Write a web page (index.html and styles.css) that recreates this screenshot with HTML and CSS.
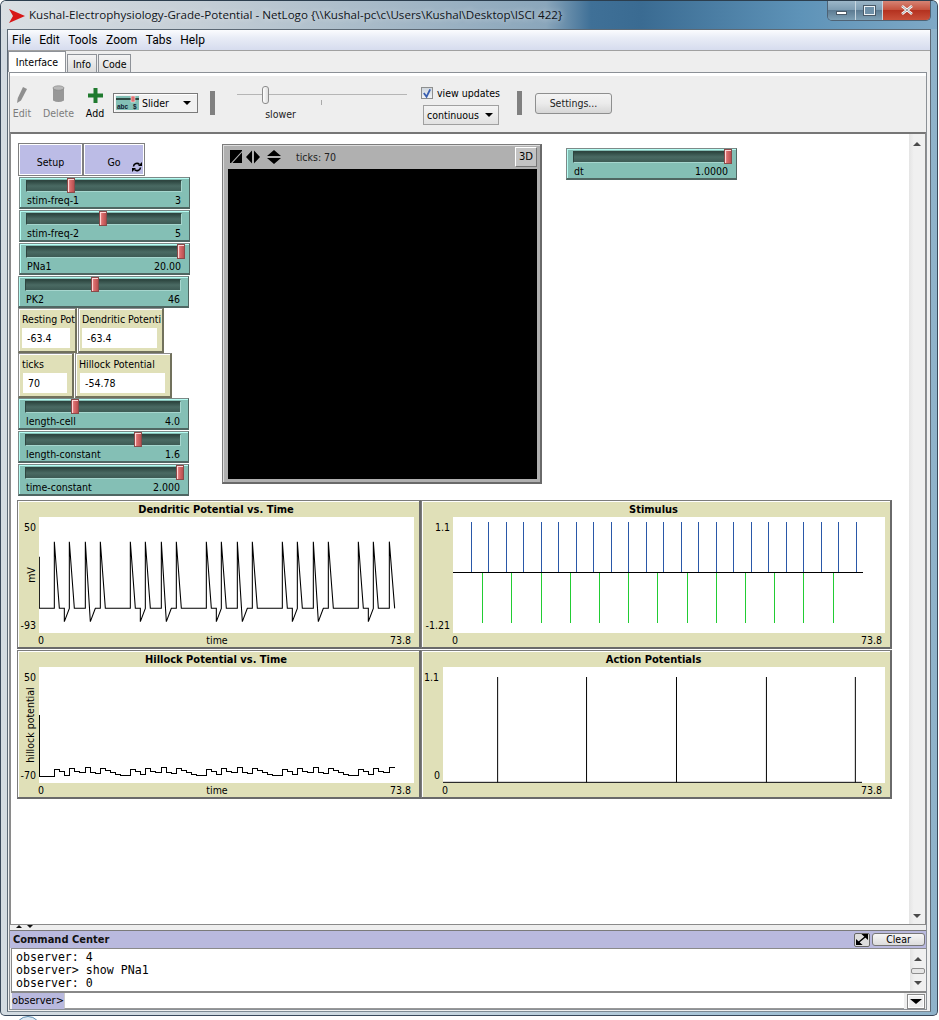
FILE: index.html
```html
<!DOCTYPE html>
<html lang="en">
<head>
<meta charset="utf-8">
<title>Kushal-Electrophysiology-Grade-Potential - NetLogo</title>
<link rel="stylesheet" href="styles.css">
</head>
<body>
<div class="window">
  <header class="titlebar">
    <svg class="app-icon" width="16" height="15" viewBox="0 0 16 15"><polygon points="0,0 16,7 0,14 4,7" fill="#d81818"/></svg>
    <span class="title-text">Kushal-Electrophysiology-Grade-Potential - NetLogo {\\Kushal-pc\c\Users\Kushal\Desktop\ISCI 422}</span>
    <div class="caption-buttons">
      <div class="cap cap-min"><span class="glyph-min"></span></div>
      <div class="cap cap-max"><span class="glyph-max"></span></div>
      <div class="cap cap-close"><svg width="14" height="10" viewBox="0 0 14 10"><path d="M2 1l10 8M12 1L2 9" stroke="#fff" stroke-width="2.6" fill="none"/><path d="M2 1l10 8M12 1L2 9" stroke="#59606a" stroke-width=".6" fill="none"/></svg></div>
    </div>
  </header>
  <div class="client">
    <nav class="menubar"><span>File</span><span>Edit</span><span>Tools</span><span>Zoom</span><span>Tabs</span><span>Help</span></nav>
    <div class="tabs">
      <span class="tab tab-active">Interface</span>
      <span class="tab tab-info">Info</span>
      <span class="tab tab-code">Code</span>
    </div>
    <div class="pane">
      <div class="toolbar">
        <div class="tool tool-edit">
          <svg width="10" height="16" viewBox="0 0 10 16"><path d="M6 0l4 2L4 13.500 0 16 .8 11z" fill="#8f8f8f"/></svg>
          <span class="muted">Edit</span>
        </div>
        <div class="tool tool-delete">
          <svg width="13" height="18" viewBox="0 0 13 18"><path d="M1 3h11v12.500q-5.500 3-11 0z" fill="#979797"/><ellipse cx="6.500" cy="3" rx="5.500" ry="2.200" fill="#b8b8b8" stroke="#8a8a8a" stroke-width=".7"/></svg>
          <span class="muted">Delete</span>
        </div>
        <div class="tool tool-add">
          <svg width="15" height="15" viewBox="0 0 15 15"><path d="M5.500 0h4v5.500H15v4H9.500V15h-4V9.500H0v-4h5.500z" fill="#1f7a2e"/></svg>
          <span>Add</span>
        </div>
        <div class="selector">
          <svg width="23" height="14" viewBox="0 0 23 14"><rect width="23" height="14" fill="#84c0b6"/><rect y="2" width="23" height="2" fill="#2f4a44"/><rect x="15" width="4" height="6" fill="#e07070" stroke="#fff" stroke-width=".5"/><text x="1" y="12.500" class="sel-text">abc</text><text x="17" y="12.500" class="sel-text">$</text></svg>
          <span class="sel-label">Slider</span>
          <span class="tri-down"></span>
        </div>
        <div class="divider div-a"></div>
        <div class="speed">
          <div class="speed-track"><span class="speed-thumb"></span><span class="speed-tick"></span></div>
          <span class="speed-label">slower</span>
        </div>
        <div class="updates">
          <label class="check-row"><span class="checkbox"><svg width="11" height="11" viewBox="0 0 11 11"><path d="M2 5l3 4 4-8" fill="none" stroke="#3a5fb0" stroke-width="2"/></svg></span>view updates</label>
          <div class="update-mode"><span>continuous</span><span class="tri-down"></span></div>
        </div>
        <div class="divider div-b"></div>
        <div class="settings">Settings...</div>
      </div>

      <div class="workspace">
        <div class="canvas">
          <div class="nl-button w-setup">Setup</div>
          <div class="nl-button w-go">Go
            <svg class="forever" width="10" height="10" viewBox="0 0 10 10"><path d="M1.500 4.500A3.500 3.500 0 0 1 7.500 2.500M8.500 5.500A3.500 3.500 0 0 1 2.500 7.500" fill="none" stroke="#000" stroke-width="1.600"/><path d="M6 4h4V0zM4 6H0v4z" fill="#000"/></svg>
          </div>

          <div class="slider w-s1"><div class="track"><span class="thumb" style="left:28.500%"></span></div><div class="slider-text"><span>stim-freq-1</span><span>3</span></div></div>
          <div class="slider w-s2"><div class="track"><span class="thumb" style="left:49.500%"></span></div><div class="slider-text"><span>stim-freq-2</span><span>5</span></div></div>
          <div class="slider w-s3"><div class="track"><span class="thumb" style="left:100%"></span></div><div class="slider-text"><span>PNa1</span><span>20.00</span></div></div>
          <div class="slider w-s4"><div class="track"><span class="thumb" style="left:45%"></span></div><div class="slider-text"><span>PK2</span><span>46</span></div></div>

          <div class="monitor w-m1"><div class="mon-label">Resting Pot</div><div class="mon-value">-63.4</div></div>
          <div class="monitor w-m2"><div class="mon-label">Dendritic Potenti</div><div class="mon-value">-63.4</div></div>
          <div class="monitor w-m3"><div class="mon-label">ticks</div><div class="mon-value">70</div></div>
          <div class="monitor w-m4"><div class="mon-label">Hillock Potential</div><div class="mon-value">-54.78</div></div>

          <div class="slider w-s5"><div class="track"><span class="thumb" style="left:32%"></span></div><div class="slider-text"><span>length-cell</span><span>4.0</span></div></div>
          <div class="slider w-s6"><div class="track"><span class="thumb" style="left:73%"></span></div><div class="slider-text"><span>length-constant</span><span>1.6</span></div></div>
          <div class="slider w-s7"><div class="track"><span class="thumb" style="left:100%"></span></div><div class="slider-text"><span>time-constant</span><span>2.000</span></div></div>
          <div class="slider w-dt"><div class="track"><span class="thumb" style="left:100%"></span></div><div class="slider-text"><span>dt</span><span>1.0000</span></div></div>

          <div class="view w-view">
            <div class="view-head">
              <svg width="52" height="14" viewBox="0 0 52 14"><path d="M0 0h12v1L1 13H0z" fill="#000"/><path d="M12 2.500V13H2.500z" fill="#000"/><path d="M16 7l6-6.500v13zM24 .5l6 6.500-6 6.500z" fill="#000"/><path d="M37 6l7-6 7 6zM37 8h14l-7 6z" fill="#000"/></svg>
              <span class="view-ticks">ticks: 70</span>
              <span class="btn-3d">3D</span>
            </div>
            <div class="view-world"></div>
          </div>

          <div class="plot w-p1">
            <div class="plot-title">Dendritic Potential vs. Time</div>
            <div class="y-axis"><span>50</span><span class="y-name">mV</span><span>-93</span></div>
            <svg class="plot-area" viewBox="87 66 1125 348" preserveAspectRatio="none">
              <polyline class="ln ln-smooth" points="88,185 88,340 133,340 133,140 148,340 163,340 163,380 178,340 178,140 193,340 226,340 226,140 241,380 256,340 271,340 271,140 286,340 361,340 361,140 376,340 391,340 391,380 406,340 406,140 421,340 454,340 454,140 469,380 484,340 499,340 499,140 514,340 589,340 589,140 604,340 619,340 619,380 634,340 634,140 649,340 682,340 682,140 697,380 712,340 727,340 727,140 742,340 817,340 817,140 832,340 847,340 847,380 862,340 862,140 877,340 910,340 910,140 925,380 940,340 955,340 955,140 970,340 1045,340 1045,140 1060,340 1075,340 1075,380 1090,340 1090,140 1105,340 1138,340 1138,140 1154,340"/>
            </svg>
            <div class="x-axis"><span>0</span><span>time</span><span>73.8</span></div>
          </div>

          <div class="plot plot-wide w-p2">
            <div class="plot-title">Stimulus</div>
            <div class="y-axis"><span>1.1</span><span>-1.21</span></div>
            <svg class="plot-area" viewBox="100 66 1296 348" preserveAspectRatio="none">
              <path class="blue" d="M154 81V232M205 81V232M259 81V232M310 81V232M364 81V232M415 81V232M469 81V232M520 81V232M574 81V232M625 81V232M679 81V232M730 81V232M784 81V232M835 81V232M889 81V232M940 81V232M994 81V232M1045 81V232M1099 81V232M1150 81V232M1204 81V232M1255 81V232M1309 81V232"/>
              <path class="green" d="M187 232V384M274 232V384M364 232V384M451 232V384M538 232V384M625 232V384M712 232V384M802 232V384M889 232V384M976 232V384M1063 232V384M1150 232V384M1240 232V384"/>
              <path class="ln" d="M100 232H1329"/>
            </svg>
            <div class="x-axis"><span>0</span><span>73.8</span></div>
          </div>

          <div class="plot w-p3">
            <div class="plot-title">Hillock Potential vs. Time</div>
            <div class="y-axis"><span>50</span><span class="y-name y-name-long">hillock potential</span><span>-70</span></div>
            <svg class="plot-area" viewBox="87 51 1125 348" preserveAspectRatio="none">
              <polyline class="ln" points="88,195 88,379 133,379 133,358 148,358 148,365 163,365 163,376 178,376 178,355 193,355 193,365 208,365 208,368 226,368 226,352 241,352 241,367 256,367 256,370 271,370 271,355 286,355 286,362 301,362 301,368 316,368 316,372 331,372 331,376 361,376 361,358 376,358 376,365 391,365 391,373 406,373 406,355 421,355 421,365 436,365 436,368 454,368 454,352 469,352 469,367 484,367 484,370 499,370 499,355 514,355 514,362 529,362 529,368 544,368 544,372 559,372 559,376 589,376 589,358 604,358 604,365 619,365 619,373 634,373 634,355 649,355 649,365 664,365 664,368 682,368 682,352 697,352 697,367 712,367 712,370 727,370 727,355 742,355 742,362 757,362 757,368 772,368 772,372 787,372 787,376 817,376 817,358 832,358 832,365 847,365 847,373 862,373 862,355 877,355 877,365 892,365 892,368 910,368 910,352 925,352 925,367 940,367 940,370 955,370 955,355 970,355 970,362 985,362 985,368 1000,368 1000,372 1015,372 1015,376 1045,376 1045,358 1060,358 1060,365 1075,365 1075,373 1090,373 1090,355 1105,355 1105,365 1120,365 1120,368 1138,368 1138,352 1154,352"/>
            </svg>
            <div class="x-axis"><span>0</span><span>time</span><span>73.8</span></div>
          </div>

          <div class="plot plot-mid w-p4">
            <div class="plot-title">Action Potentials</div>
            <div class="y-axis"><span>1.1</span><span>0</span></div>
            <svg class="plot-area" viewBox="68 51 1327 348" preserveAspectRatio="none">
              <path class="ln" d="M232 81V397M499 81V397M769 81V397M1039 81V397M1306 81V397M68 397H1326"/>
            </svg>
            <div class="x-axis"><span>0</span><span>73.8</span></div>
          </div>
        </div>
        <div class="scrollbar"><span class="sb-up"></span><span class="sb-down"></span></div>
      </div>

      <div class="splitter"><span class="tiny-up"></span><span class="tiny-down"></span></div>

      <section class="command-center">
        <div class="cc-head">
          <span class="cc-title">Command Center</span>
          <span class="cc-expand"><svg width="12" height="11" viewBox="0 0 12 11"><path d="M6.500 0H12v5zM5.500 11H0V6zM3 8l6-5" stroke="#000" stroke-width="1.500" fill="#000"/></svg></span>
          <span class="cc-clear">Clear</span>
        </div>
        <div class="cc-body">
          <div class="cc-output">observer: 4
observer&gt; show PNa1
observer: 0</div>
          <div class="scrollbar sb-small"><span class="sb-up"></span><span class="sb-grip"></span><span class="sb-down"></span></div>
        </div>
        <div class="cc-input">
          <span class="cc-prompt">observer&gt;</span>
          <span class="cc-field"></span>
          <span class="cc-drop"><span class="tri-down tri-big"></span></span>
        </div>
      </section>
    </div>
  </div>
</div>
<div class="orb"></div>
</body>
</html>
```

FILE: styles.css
```css
* { box-sizing: border-box; }
html, body { margin: 0; padding: 0; }
body {
  width: 939px;
  height: 1020px;
  overflow: hidden;
  background: #fff;
  position: relative;
  font: 10.500px/14px "DejaVu Sans Condensed", "DejaVu Sans", sans-serif;
  font-stretch: condensed;
  color: #000;
}
.window {
  width: 938px;
  height: 1016px;
  display: flex;
  flex-direction: column;
  border: 1px solid #39485a;
  border-top-color: #2c3e4e;
  border-radius: 6px 6px 5px 5px;
  background: linear-gradient(to right, #d3dbe1 0, #cdd8e0 40%, #a4c2d6 80%, #8eb2c9 100%);
  overflow: hidden;
}
.titlebar {
  height: 28px;
  flex: none;
  display: flex;
  position: relative;
  padding-left: 8px;
  align-items: center;
  background: linear-gradient(to right, #dadfe3 0, #c4ced6 200px, #a3b7c6 400px, #8aa6bb 545px, #3f7097 590px, #3a6b92 640px, #5e93b8 800px, #7fa9c6 938px);
}
.app-icon { flex: none; margin-top: 2px; }
.title-text {
  margin-left: 4px;
  font: 11.600px/16px "Open Sans", "Noto Sans", sans-serif;
  color: #10141a;
  white-space: nowrap;
  text-shadow: 0 0 6px rgba(255,255,255,.75);
}
.caption-buttons {
  position: absolute;
  right: 6px;
  top: -1px;
  display: flex;
  height: 21px;
  border: 1px solid #4e6274;
  border-top: none;
  border-radius: 0 0 5px 5px;
  overflow: hidden;
}
.cap {
  display: flex;
  align-items: center;
  justify-content: center;
  background: linear-gradient(#9fb9cb, #7d9cb2 50%, #5c7b92 52%, #7ea0b5);
  border-right: 1px solid #c7d6e0;
}
.cap-min { width: 28px; }
.cap-max { width: 27px; }
.cap-close {
  width: 47px;
  border-right: none;
  background: linear-gradient(#d8897a, #c4513d 50%, #b43220 52%, #c9503a);
}
.glyph-min { width: 11px; height: 4px; margin-top: 6px; background: #fff; border: 1px solid #4a5a68; }
.glyph-max { width: 11px; height: 9px; border: 1.500px solid #eef3f6; outline: 1px solid #4a5a68; background: #6f90a8; }

.client {
  margin: 0 6px 3px 6px;
  flex: 1;
  min-height: 0;
  display: flex;
  flex-direction: column;
  border: 1px solid #5c6975;
  border-bottom-color: #7d8a94;
  background: #f0f0f0;
}
.menubar {
  height: 21px;
  flex: none;
  display: flex;
  gap: 8.500px;
  padding: 3px 0 0 4px;
  font: 12px/14px Roboto, "Liberation Sans", sans-serif;
  border-bottom: 1px solid #a0a0a0;
  background: linear-gradient(#fbfcfe, #e8ecf6 40%, #d6dcee);
}
.tabs {
  height: 21px;
  flex: none;
  display: flex;
  align-items: flex-end;
  background: #eee;
}
.tab {
  height: 18px;
  padding: 2px 0 0;
  text-align: center;
  background: linear-gradient(#f4f4f4, #dcdcdc);
  border: 1px solid #8e9298;
  border-bottom: none;
  margin-right: 1px;
}
.tab-active {
  width: 58px;
  height: 21px;
  padding-top: 3px;
  background: #fff;
  margin-right: 1px;
}
.tab-info { width: 30px; }
.tab-code { width: 33px; }
.pane {
  flex: 1;
  min-height: 0;
  margin: 0 3px 1px 1px;
  display: flex;
  flex-direction: column;
  border: 1px solid #8b9096;
}
.toolbar {
  height: 59px;
  flex: none;
  display: flex;
  align-items: center;
  padding: 0 0 2px 2px;
  border-top: 3px solid #fff;
  background: #eee;
}
.tool {
  display: flex;
  flex-direction: column;
  align-items: center;
  justify-content: flex-end;
  height: 34px;
  margin-right: 11px;
  white-space: nowrap;
}
.tool svg { flex: none; margin-bottom: 3px; }
.tool-edit { width: 20px; }
.tool-delete { width: 31px; margin-right: 12px; }
.tool-add { width: 18px; margin-right: 9px; }
.muted { color: #7c7c7c; }
.selector {
  width: 85px;
  height: 20px;
  display: flex;
  align-items: center;
  padding: 0 6px 0 2px;
  background: #f1f1f1;
  border: 1px solid #7a7a7a;
  box-shadow: inset 1px 1px 0 #fff;
}
.sel-text { font: bold 6.500px "Liberation Sans", sans-serif; fill: #123; }
.sel-label { margin-left: 3px; flex: 1; }
.tri-down {
  width: 0;
  height: 0;
  border: 4px solid transparent;
  border-top: 4px solid #000;
  border-bottom: none;
}
.tri-big { border-width: 5px 6px 0; }
.divider { width: 5px; height: 24px; flex: none; background: #808080; }
.div-a { margin: 0 22px 0 12px; }
.div-b { margin: 0 13px 0 16px; }
.speed {
  width: 170px;
  height: 36px;
  flex: none;
  margin-right: 14px;
  display: flex;
  flex-direction: column;
}
.speed-track {
  height: 20px;
  position: relative;
  flex: none;
  background: linear-gradient(#b5b5b5, #b5b5b5) 0 9px / 100% 1px no-repeat;
}
.speed-thumb {
  position: absolute;
  left: 25px;
  top: 1px;
  width: 7px;
  height: 18px;
  border: 1px solid #8c8c8c;
  border-radius: 3px;
  background: linear-gradient(to right, #fff, #ddd);
}
.speed-tick { position: absolute; left: 84px; top: 15px; width: 1px; height: 5px; background: #aaa; }
.speed-label { text-align: center; margin-right: 83px; margin-top: 2px; color: #222; }
.updates {
  width: 80px;
  flex: none;
  margin-top: 5px;
  display: flex;
  flex-direction: column;
  gap: 5px;
}
.check-row { display: flex; align-items: center; gap: 4px; white-space: nowrap; height: 14px; }
.checkbox {
  width: 12px;
  height: 12px;
  flex: none;
  display: flex;
  border: 1px solid #8e8f8f;
  background: linear-gradient(#cfd6dd, #f2f4f6);
}
.update-mode {
  width: 76px;
  height: 20px;
  margin-left: 2px;
  display: flex;
  align-items: center;
  justify-content: space-between;
  padding: 0 5px 0 3px;
  border: 1px solid #a0a0a0;
  background: linear-gradient(#f4f4f4, #e2e2e2);
}
.settings {
  width: 77px;
  height: 21px;
  text-align: center;
  line-height: 19px;
  border: 1px solid #8e8f8f;
  border-radius: 3px;
  background: linear-gradient(#f4f4f4, #ebebeb 50%, #d6d6d6);
  color: #222;
}

.workspace {
  flex: 1;
  min-height: 0;
  display: flex;
  border: 1px solid #8a8a8a;
  border-top: 2px solid #767676;
  background: #fff;
}
.canvas {
  position: relative;
  flex: 1;
  min-width: 0;
  margin-top: -1px;
}
.scrollbar {
  width: 16px;
  flex: none;
  display: flex;
  flex-direction: column;
  justify-content: space-between;
  align-items: center;
  padding: 8px 0 6px;
  background: linear-gradient(to right, #e4e4e4, #f0f0f0 30%, #f0f0f0);
}
.sb-up, .sb-down { width: 0; height: 0; border: 4px solid transparent; }
.sb-up { border-top: none; border-bottom: 4px solid #4a4a4a; }
.sb-down { border-bottom: none; border-top: 4px solid #4a4a4a; }

.w-setup { left: 7px; top: 10px; width: 65px; height: 33px; }
.w-go { left: 72px; top: 10px; width: 62px; height: 33px; }
.w-s1 { left: 8px; top: 44px; }
.w-s2 { left: 8px; top: 77px; }
.w-s3 { left: 8px; top: 110px; }
.w-s4 { left: 7px; top: 143px; }
.w-s5 { left: 7px; top: 265px; }
.w-s6 { left: 7px; top: 298px; }
.w-s7 { left: 7px; top: 331px; }
.w-dt { left: 555px; top: 15px; }
.w-m1 { left: 7px; top: 175px; width: 59px; height: 45px; }
.w-m2 { left: 67px; top: 175px; width: 86px; height: 45px; }
.w-m3 { left: 7px; top: 220px; width: 56px; height: 45px; }
.w-m4 { left: 64px; top: 220px; width: 97px; height: 45px; }
.w-view { left: 211px; top: 11px; width: 320px; height: 340px; }
.w-p1 { left: 6px; top: 367px; width: 404px; }
.w-p2 { left: 410px; top: 367px; width: 471px; }
.w-p3 { left: 6px; top: 517px; width: 404px; }
.w-p4 { left: 410px; top: 517px; width: 471px; }

.nl-button {
  position: absolute;
  display: flex;
  align-items: center;
  justify-content: center;
  padding-top: 4px;
  background: #bcbce6;
  border: 1px solid #7f7f7f;
  box-shadow: inset 1px 1px 0 #fff, inset -1px -1px 0 #fff;
}
.forever { position: absolute; right: 2px; bottom: 3px; }
.slider {
  position: absolute;
  width: 171px;
  height: 32px;
  padding: 2px 7px 0 6px;
  background: #84bfb5;
  border: 1px solid #7c8a88;
  border-right-color: #4f6662;
  border-bottom: 2px solid #4f6662;
  box-shadow: inset 1px 1px 0 #b6fdf3;
}
.track {
  position: relative;
  height: 12px;
  background: linear-gradient(#2d4640, #4a6a63 50%, #3d5a54);
  border: 1px solid #2f4540;
  border-bottom-color: #a6d6ce;
  border-right-color: #a6d6ce;
}
.thumb {
  position: absolute;
  top: -3px;
  width: 8px;
  height: 15px;
  margin-left: -4px;
  background: linear-gradient(to right, #f09a9a, #d86a6a 40%, #b85050);
  border: 1px solid #8a4a4a;
  box-shadow: inset 1px 1px 0 #ffd6d6;
}
.slider-text {
  display: flex;
  justify-content: space-between;
  margin-top: 1px;
  padding: 0 1px;
  white-space: nowrap;
}
.monitor {
  position: absolute;
  overflow: hidden;
  padding: 3px 5px 0 3px;
  background: #e0e0b8;
  border: 1px solid #8c8c8c;
  border-right: 2px solid #71715c;
  border-bottom: 2px solid #71715c;
  box-shadow: inset 1px 1px 0 #fff;
}
.mon-label { height: 14px; white-space: nowrap; }
.mon-value {
  height: 20px;
  margin-top: 2px;
  padding: 3px 0 0 5px;
  background: #fff;
}
.w-m3 .mon-value, .w-m4 .mon-value { margin-left: 1px; }
.view {
  position: absolute;
  display: flex;
  flex-direction: column;
  padding: 0 3px 3px 5px;
  background: #b0b0b0;
  border: 1px solid #7c7c7c;
  border-right: 2px solid #6a6a6a;
  border-bottom: 2px solid #6a6a6a;
  box-shadow: inset 1px 1px 0 #ddd;
}
.view-head {
  height: 24px;
  flex: none;
  display: flex;
  align-items: center;
  padding-left: 2px;
}
.view-ticks { margin-left: 14px; color: #222; }
.btn-3d {
  margin-left: auto;
  width: 22px;
  height: 20px;
  text-align: center;
  font: 10px/18px "DejaVu Sans", sans-serif;
  background: #c4c4c4;
  border: 1px solid #777;
  border-top-color: #fff;
  border-left-color: #fff;
}
.view-world { flex: 1; background: #000; }
.plot {
  position: absolute;
  height: 149px;
  display: grid;
  grid-template-columns: 21px 1fr;
  grid-template-rows: 16px 116px 1fr;
  padding-right: 5px;
  background: #e0e0b8;
  border: 1px solid #7c7c7c;
  border-right: 2px solid #6a6a6a;
  border-bottom: 2px solid #6a6a6a;
  box-shadow: inset 1px 1px 0 #fff;
}
.plot-wide { grid-template-columns: 31px 1fr; }
.plot-mid { grid-template-columns: 21px 1fr; }
.plot-title {
  grid-column: 1 / -1;
  text-align: center;
  font-weight: 700;
  font-size: 11px;
  line-height: 15px;
  padding-top: 1px;
}
.y-axis {
  position: relative;
  display: flex;
  flex-direction: column;
  justify-content: space-between;
  align-items: flex-end;
  padding: 3px 3px 0 0;
  white-space: nowrap;
}
.y-axis span:last-child { margin-bottom: 1px; }
.plot-mid .y-axis span:first-child { margin-right: 1px; }
.y-name {
  position: absolute;
  right: 2px;
  top: 50%;
  writing-mode: vertical-rl;
  transform: translateY(-50%) rotate(180deg);
  line-height: 12px;
}
.y-name-long { right: 3px; }
.plot-area { width: 100%; height: 116px; display: block; background: #fff; }
.ln, .blue, .green { fill: none; stroke-width: 3; shape-rendering: crispEdges; }
.ln { stroke: #000; }
.ln-smooth { shape-rendering: auto; stroke-width: 3.200; }
.blue { stroke: #2a58a8; }
.green { stroke: #22cc33; }
.x-axis {
  grid-column: 2;
  display: flex;
  justify-content: space-between;
  padding: 0 3px 0 0;
  margin-left: -1px;
}

.splitter {
  height: 5px;
  flex: none;
  display: flex;
  gap: 5px;
  padding-left: 6px;
  background: #eee;
}
.tiny-up, .tiny-down { width: 0; height: 0; border: 3px solid transparent; }
.tiny-up { border-top: none; border-bottom: 3px solid #111; }
.tiny-down { border-bottom: none; border-top: 3px solid #111; }
.command-center {
  height: 79px;
  flex: none;
  display: flex;
  flex-direction: column;
  border-top: 1px solid #7a7a7a;
  background: #eee;
}
.cc-head {
  height: 17px;
  flex: none;
  display: flex;
  align-items: center;
  padding: 0 1px 0 3px;
  background: #b9b9de;
}
.cc-title { font-weight: 700; font-size: 11px; margin-right: auto; color: #111; }
.cc-expand {
  width: 16px;
  height: 14px;
  display: flex;
  align-items: center;
  justify-content: center;
  margin-right: 2px;
  background: #ddd;
  border: 1px solid #666;
  border-radius: 2px;
}
.cc-clear {
  width: 53px;
  height: 13px;
  text-align: center;
  line-height: 10px;
  background: linear-gradient(#f6f6f6, #dcdcdc);
  border: 1px solid #777;
  border-radius: 3px;
}
.cc-body {
  height: 45px;
  flex: none;
  display: flex;
  margin-left: 1px;
  background: #fff;
  border-top: 1px solid #8a8a8a;
  border-bottom: 2px solid #888;
  border-left: 1px solid #8a8a8a;
}
.cc-output {
  flex: 1;
  padding: 2px 0 0 4px;
  font: 11.600px/13px "DejaVu Sans Mono", "Liberation Mono", monospace;
  white-space: pre;
}
.sb-grip {
  width: 14px;
  height: 6px;
  border: 1px solid #8e8e8e;
  border-radius: 2px;
  background: #e6e6e6;
}
.cc-input {
  flex: 1;
  display: flex;
  padding-left: 2px;
}
.cc-prompt { width: 52px; line-height: 15px; font-size: 11px; background: #b9b9de; }
.cc-field { flex: 1; background: #fff; border-left: 1px solid #ccc; border-bottom: 1px solid #999; }
.cc-drop {
  width: 18px;
  margin: 1px 1px 0 3px;
  display: flex;
  align-items: center;
  justify-content: center;
  background: #eee;
  border: 1px solid #888;
  box-shadow: inset 0 0 0 1px #fff;
}
.orb {
  position: absolute;
  left: 15px;
  top: 1016px;
  width: 26px;
  height: 26px;
  border-radius: 50%;
  border: 1px solid #5d8db0;
  background: #dfeaf3;
}
```
